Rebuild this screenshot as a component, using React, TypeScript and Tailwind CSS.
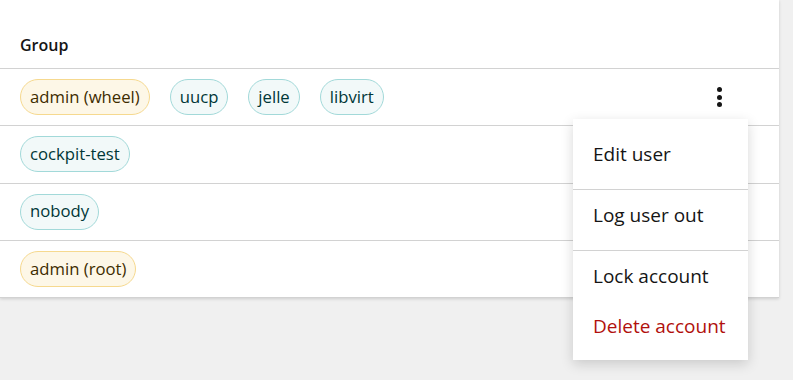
import React from "react";

type Tone = "gold" | "cyan";

const rows: { groups: { name: string; tone: Tone }[]; kebab?: boolean }[] = [
  {
    groups: [
      { name: "admin (wheel)", tone: "gold" },
      { name: "uucp", tone: "cyan" },
      { name: "jelle", tone: "cyan" },
      { name: "libvirt", tone: "cyan" },
    ],
    kebab: true,
  },
  { groups: [{ name: "cockpit-test", tone: "cyan" }] },
  { groups: [{ name: "nobody", tone: "cyan" }] },
  { groups: [{ name: "admin (root)", tone: "gold" }] },
];

function GroupLabel({ name, tone }: { name: string; tone: Tone }) {
  const cls =
    tone === "gold"
      ? "border-[#f6d98f] bg-[#fdf7e7] text-[#3d2c00]"
      : "border-[#a2d9d9] bg-[#f2f9f9] text-[#003737]";
  return (
    <span
      className={`inline-flex h-[36px] items-center rounded-full border px-[9px] text-[16.7px] leading-none ${cls}`}
    >
      {name}
    </span>
  );
}

function Kebab() {
  return (
    <button className="flex h-[36px] w-[40px] flex-col items-center justify-center gap-[2.5px]">
      <span className="h-[5px] w-[5px] rounded-full bg-[#151515]" />
      <span className="h-[5px] w-[5px] rounded-full bg-[#151515]" />
      <span className="h-[5px] w-[5px] rounded-full bg-[#151515]" />
    </button>
  );
}

export default function App() {
  return (
    <div
      className="relative h-[380px] w-[793px] overflow-hidden bg-[#f0f0f0]"
      style={{ fontFamily: '"Open Sans", "Noto Sans", sans-serif' }}
    >
      <div className="w-[779px] bg-white shadow-[0_1px_3px_rgba(0,0,0,0.15)]">
        {/* Header */}
        <div className="flex h-[69px] items-end border-b border-[#d2d2d2] px-[20px] pb-[11px]">
          <span className="text-[16px] font-semibold text-[#151515]">Group</span>
        </div>

        {/* Rows */}
        {rows.map((row, i) => (
          <div
            key={i}
            className="flex h-[57.3px] items-center justify-between border-b border-[#d2d2d2] px-[20px]"
          >
            <div className="flex items-center gap-[20px]">
              {row.groups.map((g) => (
                <GroupLabel key={g.name} {...g} />
              ))}
            </div>
            {row.kebab && (
              <div className="mr-[20px]">
                <Kebab />
              </div>
            )}
          </div>
        ))}
      </div>

      {/* Dropdown menu */}
      <div className="absolute left-[573px] top-[119px] w-[175px] bg-white pb-[9px] pt-[10px] shadow-[0_4px_12px_rgba(0,0,0,0.16)]">
        <div className="flex h-[50px] items-center px-[20px] text-[19px] text-[#151515]">Edit user</div>
        <div className="mt-[10px] h-px bg-[#d2d2d2]" />
        <div className="flex h-[50px] items-center px-[20px] text-[19px] text-[#151515]">Log user out</div>
        <div className="mt-[10px] h-px bg-[#d2d2d2]" />
        <div className="flex h-[50px] items-center px-[20px] text-[19px] text-[#151515]">Lock account</div>
        <div className="flex h-[50px] items-center px-[20px] text-[19px] text-[#b1100c]">Delete account</div>
      </div>
    </div>
  );
}
